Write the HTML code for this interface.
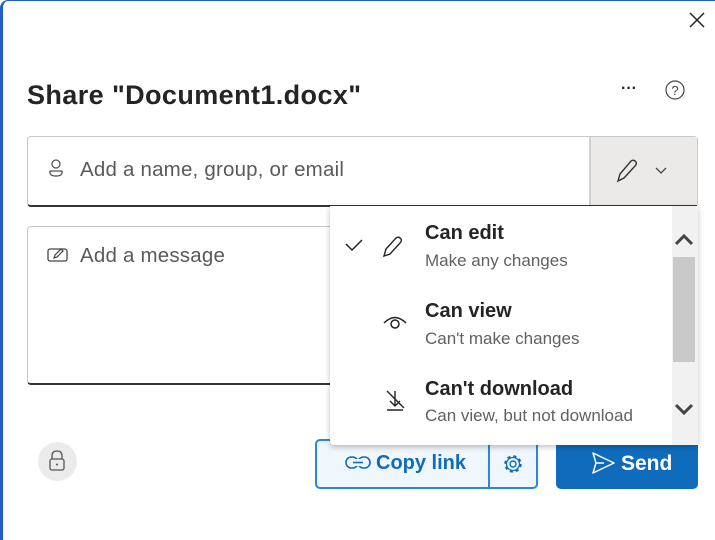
<!DOCTYPE html>
<html><head><style>
*{margin:0;padding:0;box-sizing:border-box}
body{width:715px;height:520px;background:#fff;font-family:"Liberation Sans",sans-serif;position:relative;overflow:hidden;color:#242424}
.abs{position:absolute}
</style></head><body>
<div class="abs" style="left:0;top:0;width:730px;height:540px;border-left:3px solid #1f5fc8;border-top:1px solid #1f5fc8;border-radius:8px 0 0 0"></div>
<svg class="abs" style="left:688px;top:11px" width="18" height="18"><path d="M2 2L16 16M16 2L2 16" stroke="#242424" stroke-width="1.5"/></svg>
<div class="abs" style="left:27px;top:80px;font-size:27px;font-weight:bold;color:#242424;letter-spacing:0.4px">Share "Document1.docx"</div>
<div class="abs" style="left:621px;top:80px;font-size:16px;font-weight:bold">···</div>
<svg class="abs" style="left:665px;top:80px" width="20" height="20"><circle cx="10" cy="10" r="9" fill="none" stroke="#444" stroke-width="1.2"/><text x="10" y="15" font-size="13" text-anchor="middle" fill="#444" font-family="Liberation Sans">?</text></svg>
<div class="abs" style="left:27px;top:136px;width:671px;height:71px;border:1px solid #c8c8c8;border-bottom:2px solid #333;border-radius:4px"></div>
<div class="abs" style="left:589px;top:137px;width:108px;height:68px;background:#ebeae9;border-left:2px solid #d0d0d0"></div>
<svg class="abs" style="left:614px;top:157px" width="60" height="28"><path d="M4 24L6 17L17 4Q20 2 22 5Q23 7 21 9L10 21Z" fill="none" stroke="#333" stroke-width="1.4"/><path d="M42 11L47 16L52 11" fill="none" stroke="#444" stroke-width="1.3"/></svg>
<svg class="abs" style="left:47px;top:158px" width="18" height="22"><circle cx="9" cy="6" r="4" fill="none" stroke="#555" stroke-width="1.3"/><path d="M3 13H15Q16 18 9 18Q2 18 3 13Z" fill="none" stroke="#555" stroke-width="1.3"/></svg>
<div class="abs" style="left:80px;top:158px;font-size:20.5px;color:#5a5a5a;letter-spacing:0.2px">Add a name, group, or email</div>
<div class="abs" style="left:27px;top:226px;width:320px;height:159px;border:1px solid #c8c8c8;border-bottom:2px solid #333;border-radius:4px"></div>
<svg class="abs" style="left:47px;top:246px" width="22" height="18"><rect x="1" y="3" width="19" height="12" rx="2" fill="none" stroke="#444" stroke-width="1.3"/><path d="M7 12L8 9L14 3L16 5L10 11Z" fill="none" stroke="#444" stroke-width="1.2"/></svg>
<div class="abs" style="left:80px;top:244px;font-size:20.5px;color:#5a5a5a;letter-spacing:0.2px">Add a message</div>
<div class="abs" style="left:38px;top:442px;width:39px;height:39px;border-radius:50%;background:#ebebeb"></div>
<svg class="abs" style="left:47px;top:449px" width="20" height="24"><path d="M5 10V7Q5 2 10 2Q15 2 15 7V10" fill="none" stroke="#555" stroke-width="1.3"/><rect x="3" y="10" width="14" height="11" rx="2" fill="none" stroke="#555" stroke-width="1.3"/><circle cx="10" cy="15.5" r="1" fill="#555"/></svg>
<div class="abs" style="left:315px;top:439px;width:223px;height:50px;border:2px solid #2b88d8;border-radius:5px;background:#eff6fc"></div>
<div class="abs" style="left:488px;top:441px;width:2px;height:46px;background:#2b88d8"></div>
<svg class="abs" style="left:345px;top:455px" width="28" height="16"><rect x="1" y="2" width="12" height="11" rx="5.5" fill="none" stroke="#0f6cbd" stroke-width="1.6"/><rect x="13" y="2" width="12" height="11" rx="5.5" fill="none" stroke="#0f6cbd" stroke-width="1.6"/><rect x="10" y="4" width="6" height="7" fill="#eff6fc"/><path d="M8 7.5H18" stroke="#0f6cbd" stroke-width="1.6"/></svg>
<div class="abs" style="left:376px;top:452px;font-size:20px;color:#0f6cbd;font-weight:bold">Copy link</div>
<svg class="abs" style="left:502px;top:453px" width="22" height="22"><circle cx="11" cy="11" r="3" fill="none" stroke="#0f6cbd" stroke-width="1.4"/><circle cx="11" cy="11" r="7.5" fill="none" stroke="#0f6cbd" stroke-width="2.5" stroke-dasharray="3 2.9"/><circle cx="11" cy="11" r="6.5" fill="none" stroke="#0f6cbd" stroke-width="1.3"/></svg>
<div class="abs" style="left:556px;top:439px;width:142px;height:50px;border-radius:5px;background:#0f6cbd"></div>
<svg class="abs" style="left:590px;top:451px" width="26" height="24"><path d="M3 2L24 12L3 22L6 12Z M6 12H14" fill="none" stroke="#fff" stroke-width="1.5" stroke-linejoin="round"/></svg>
<div class="abs" style="left:621px;top:452px;font-size:21px;color:#fff;font-weight:bold">Send</div>
<div class="abs" style="left:330px;top:206px;width:368px;height:239px;background:#fff;box-shadow:0 2px 6px rgba(0,0,0,.25);border-radius:0 0 4px 4px"></div>
<div class="abs" style="left:672px;top:206px;width:26px;height:239px;background:#f1f1f1"></div>
<div class="abs" style="left:673px;top:257px;width:22px;height:105px;background:#c8c8c8"></div>
<svg class="abs" style="left:672px;top:228px" width="26" height="200"><path d="M4 16L12 8L20 16" fill="none" stroke="#444" stroke-width="3"/><path d="M4 177L12 185L20 177" fill="none" stroke="#444" stroke-width="3"/></svg>
<svg class="abs" style="left:344px;top:234px" width="60" height="26"><path d="M2 10L8 16L18 6" fill="none" stroke="#242424" stroke-width="1.5"/><path d="M40 22L42 15L52 4Q55 2 57 5Q58 7 56 9L46 20Z" fill="none" stroke="#242424" stroke-width="1.4"/></svg>
<div class="abs" style="left:425px;top:222px;font-size:20px;font-weight:bold">Can edit</div>
<div class="abs" style="left:425px;top:251px;font-size:17px;color:#616161">Make any changes</div>
<svg class="abs" style="left:382px;top:312px" width="26" height="20"><path d="M2 11Q13 0 24 11" fill="none" stroke="#242424" stroke-width="1.5"/><circle cx="13" cy="12" r="4" fill="none" stroke="#242424" stroke-width="1.5"/></svg>
<div class="abs" style="left:425px;top:300px;font-size:20px;font-weight:bold">Can view</div>
<div class="abs" style="left:425px;top:329px;font-size:17px;color:#616161">Can't make changes</div>
<svg class="abs" style="left:384px;top:388px" width="24" height="26"><path d="M11 3V18M6 13L11 18L16 13M3 3L20 20M3 22H19" fill="none" stroke="#242424" stroke-width="1.4"/></svg>
<div class="abs" style="left:425px;top:378px;font-size:20px;font-weight:bold">Can't download</div>
<div class="abs" style="left:425px;top:406px;font-size:17px;color:#616161">Can view, but not download</div>
</body></html>
